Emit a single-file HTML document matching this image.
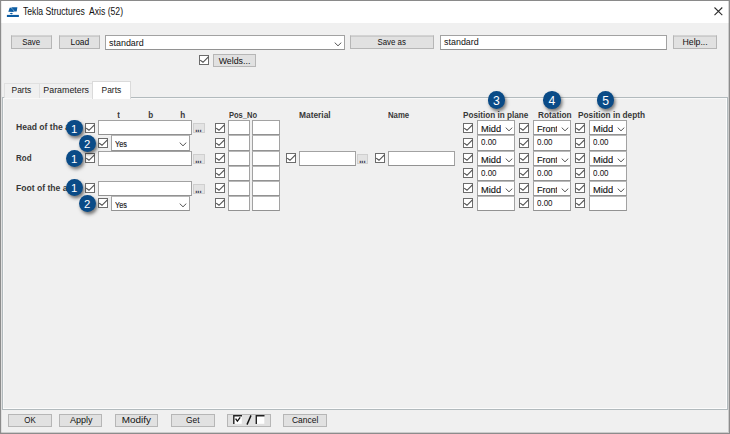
<!DOCTYPE html>
<html><head><meta charset="utf-8"><title>Tekla Structures Axis (52)</title>
<style>
*{box-sizing:border-box;margin:0;padding:0}
html,body{width:730px;height:434px;overflow:hidden;background:#f0f0f0}
body{font-family:"Liberation Sans",sans-serif;font-size:9.4px;color:#1a1a1a;position:relative}
#win{position:absolute;left:0;top:0;width:730px;height:434px;background:#f0f0f0;border:1px solid #8c8c8c;border-top-color:#8a8a8a;overflow:hidden}
#win>*{position:absolute}
#in{position:absolute;left:-1px;top:-1px;width:730px;height:434px}
#in:after{content:'';position:absolute;left:1px;top:1px;width:728px;height:432px;box-shadow:inset -1px -1px 0 rgba(110,110,110,.28),inset 1px 0 0 rgba(110,110,110,.12);pointer-events:none}
#in>*{position:absolute}
.title{left:1px;top:1px;width:728px;height:22px;background:#fff}
.tt{font-size:9.9px;color:#111;white-space:nowrap;line-height:13px}
.btn{background:#e1e1e1;border:1px solid #b6b6b6;text-align:center;white-space:nowrap;font-size:9.75px;color:#111}
.btn.hb{border-top-color:#d3d3d3;box-shadow:inset 0 1px 0 #cbcbcb}
.btn.sm{font-size:8px;font-weight:bold;line-height:11.4px!important;color:#3a3a55;border-color:#cfcfcf;background:#e3e3e3}
.tf{background:#fff;border:1px solid #a2a2a2;border-bottom-color:#929292;white-space:nowrap;overflow:hidden}
.tf>span{position:absolute;left:2.6px;top:-0.6px;line-height:13px;font-size:9.75px;color:#111}
.tf.st{border-top-color:#b8b8b8}
.tf.top>span{top:-0.9px;left:3.3px}
.tf.co.big>span{top:0.3px;left:3.1px}
.tf.co>span{top:1px;right:12.7px;overflow:hidden;-webkit-text-stroke:0.15px #222}
.tf.co.big>span{-webkit-text-stroke:0}
.tf i{position:absolute;top:0;height:100%;width:8px}
.tf i svg{position:absolute;left:0;top:5.8px}
.cb{width:10px;height:10px;background:#fff;border:1px solid #6c6c6c}
.cb svg{position:absolute;left:-1px;top:-1px}
.cb{overflow:visible}
.lb{white-space:nowrap;line-height:12px;font-size:9.75px}
.lb.b{font-weight:bold;color:#383838;font-size:9px}
.page{left:2px;top:97px;width:726px;height:313px;border:1px solid #b2babd;box-shadow:inset -1px -1px 0 #fcfcfc, inset 1px 1px 0 #f8f8f8}
.tab{border:1px solid #e0e0e0;border-bottom:none;background:#f0f0f0;text-align:center;line-height:12.5px;font-size:9.75px;white-space:nowrap}
.tab.act{background:#fff;line-height:15px;border-color:#dadada}
.ci{border-radius:50%;background:#0a4b87;color:#fff;text-align:center;font-size:12px;box-shadow:1.5px 2.5px 3.5px rgba(0,0,0,.5)}
.ico{overflow:visible}
.sx{display:inline-block;white-space:nowrap}
.sx.l{transform-origin:0 50%}
.sx.c{transform-origin:50% 50%}
</style></head>
<body><div id="win"><div id="in">
<div class="title"></div>
<svg class="ico" viewBox="0 0 30 18" width="30" height="18" style="left:0;top:0">
<path d="M9.7 7.8 L12 7.5 L12.1 7.25 L17.4 7.2 L16.7 11.5 L13.9 11.6 L13.8 11.9 L8.3 11.8 Z" fill="#0c5ca2"/>
<path d="M10.8 7.6 L13.7 10 L13.8 11.8" fill="none" stroke="#fff" stroke-width="0.45" opacity="0.85"/>
<ellipse cx="11.3" cy="13.5" rx="1.6" ry="0.5" fill="#0c5ca2"/>
<rect x="11.05" y="12.6" width="0.5" height="2.3" fill="#0c5ca2" opacity="0.55"/>
<rect x="6.9" y="14.9" width="12" height="2.1" fill="#0c5ca2"/>
</svg>
<div class="tt" style="left:23px;top:4.6px;"><span class="sx l" style="transform:scale(0.872,1.1)">Tekla Structures&nbsp; Axis (52)</span></div>
<svg class="ico" viewBox="0 0 9 9" width="9" height="9" style="left:713.6px;top:6.9px"><path d="M0.5 0.5 L8.3 8.1 M8.3 0.5 L0.5 8.1" stroke="#2b2b2b" stroke-width="1.05" fill="none"/></svg>
<div class="btn hb" style="left:11px;top:35px;width:41px;height:14px;line-height:12px"><span class="sx c" style="transform:scaleX(0.808)">Save</span></div>
<div class="btn hb" style="left:59px;top:35px;width:41px;height:14px;line-height:12px"><span class="sx c" style="transform:scaleX(0.867)">Load</span></div>
<div class="tf co big" style="left:105px;top:35px;width:239.5px;height:15px"><span><span class="sx l" style="transform:scaleX(0.916)">standard</span></span><i style="right:2px"><svg class="arr" viewBox="0 0 8 5" width="8" height="5"><path d="M0.7 0.6 L4 3.8 L7.3 0.6" fill="none" stroke="#555" stroke-width="1"/></svg></i></div>
<div class="btn hb" style="left:350px;top:35px;width:84px;height:14px;line-height:12px"><span class="sx c" style="transform:scaleX(0.808)">Save as</span></div>
<div class="tf top" style="left:439.5px;top:35px;width:227.5px;height:15px"><span><span class="sx l" style="transform:scaleX(0.916)">standard</span></span></div>
<div class="btn hb" style="left:673.4px;top:35px;width:43.3px;height:14px;line-height:12px"><span class="sx c" style="transform:scaleX(0.896)">Help...</span></div>
<div class="cb" style="left:198.7px;top:55.2px"><svg viewBox="0 0 10 10" width="10" height="10"><path d="M1.2 5.1 L4 7.3 L9.4 1.9" fill="none" stroke="#505050" stroke-width="1.15"/></svg></div>
<div class="btn" style="left:213px;top:54px;width:42.6px;height:13px;line-height:11px"><span class="sx c" style="transform:scaleX(0.906)">Welds...</span></div>
<div class="page"></div>
<div class="tab" style="left:4px;top:83px;width:35.5px;height:15px;"><span class="sx c" style="transform:scaleX(0.867)">Parts</span></div>
<div class="tab" style="left:39px;top:83px;width:53.5px;height:15px;padding-left:1.4px;"><span class="sx c" style="transform:scaleX(0.906)">Parameters</span></div>
<div class="tab act" style="left:92px;top:81px;width:38.5px;height:17.5px;"><span class="sx c" style="transform:scaleX(0.867)">Parts</span></div>
<div class="lb b" style="left:108.7px;top:108.8px;width:20px;text-align:center"><span class="sx c" style="transform:scaleX(0.9)">t</span></div>
<div class="lb b" style="left:141px;top:108.8px;width:20px;text-align:center"><span class="sx c" style="transform:scaleX(0.9)">b</span></div>
<div class="lb b" style="left:172.7px;top:108.8px;width:20px;text-align:center"><span class="sx c" style="transform:scaleX(0.9)">h</span></div>
<div class="lb b" style="left:228.5px;top:108.8px;"><span class="sx l" style="transform:scaleX(0.836)">Pos_No</span></div>
<div class="lb b" style="left:299.3px;top:108.8px;"><span class="sx l" style="transform:scaleX(0.93)">Material</span></div>
<div class="lb b" style="left:388.3px;top:108.8px;"><span class="sx l" style="transform:scaleX(0.865)">Name</span></div>
<div class="lb b" style="left:462.5px;top:108.8px;"><span class="sx l" style="transform:scaleX(0.908)">Position in plane</span></div>
<div class="lb b" style="left:538px;top:108.8px;"><span class="sx l" style="transform:scaleX(0.92)">Rotation</span></div>
<div class="lb b" style="left:577.5px;top:108.8px;"><span class="sx l" style="transform:scaleX(0.918)">Position in depth</span></div>
<div class="lb b" style="left:16px;top:121.3px;"><span class="sx l" style="transform:scaleX(0.953)">Head of the a</span></div>
<div class="lb b" style="left:16px;top:151.6px;"><span class="sx l" style="transform:scaleX(0.886)">Rod</span></div>
<div class="lb b" style="left:16px;top:181.6px;"><span class="sx l" style="transform:scaleX(0.953)">Foot of the a</span></div>
<div class="cb" style="left:85px;top:123px"><svg viewBox="0 0 10 10" width="10" height="10"><path d="M1.2 5.1 L4 7.3 L9.4 1.9" fill="none" stroke="#505050" stroke-width="1.15"/></svg></div>
<div class="tf" style="left:98px;top:120px;width:93.6px;height:15px"><span></span></div>
<div class="btn sm" style="left:193px;top:123px;width:11.6px;height:10px;line-height:8px"><span class="sx c" style="transform:translateY(1px) scale(0.95,1.9);transform-origin:50% 80%">...</span></div>
<div class="cb" style="left:85px;top:153px"><svg viewBox="0 0 10 10" width="10" height="10"><path d="M1.2 5.1 L4 7.3 L9.4 1.9" fill="none" stroke="#505050" stroke-width="1.15"/></svg></div>
<div class="tf" style="left:98px;top:151px;width:93.6px;height:15px"><span></span></div>
<div class="btn sm" style="left:193px;top:154px;width:11.6px;height:10px;line-height:8px"><span class="sx c" style="transform:translateY(1px) scale(0.95,1.9);transform-origin:50% 80%">...</span></div>
<div class="cb" style="left:85px;top:183px"><svg viewBox="0 0 10 10" width="10" height="10"><path d="M1.2 5.1 L4 7.3 L9.4 1.9" fill="none" stroke="#505050" stroke-width="1.15"/></svg></div>
<div class="tf" style="left:98px;top:181px;width:93.6px;height:15px"><span></span></div>
<div class="btn sm" style="left:193px;top:184px;width:11.6px;height:10px;line-height:8px"><span class="sx c" style="transform:translateY(1px) scale(0.95,1.9);transform-origin:50% 80%">...</span></div>
<div class="cb" style="left:98px;top:138px"><svg viewBox="0 0 10 10" width="10" height="10"><path d="M1.2 5.1 L4 7.3 L9.4 1.9" fill="none" stroke="#505050" stroke-width="1.15"/></svg></div>
<div class="tf co st" style="left:111px;top:135px;width:79px;height:16px"><span><span class="sx l" style="transform:scaleX(0.75)">Yes</span></span><i style="right:2px"><svg class="arr" viewBox="0 0 8 5" width="8" height="5"><path d="M0.7 0.6 L4 3.8 L7.3 0.6" fill="none" stroke="#555" stroke-width="1"/></svg></i></div>
<div class="cb" style="left:98px;top:198px"><svg viewBox="0 0 10 10" width="10" height="10"><path d="M1.2 5.1 L4 7.3 L9.4 1.9" fill="none" stroke="#505050" stroke-width="1.15"/></svg></div>
<div class="tf co st" style="left:111px;top:196px;width:79px;height:15px"><span><span class="sx l" style="transform:scaleX(0.75)">Yes</span></span><i style="right:2px"><svg class="arr" viewBox="0 0 8 5" width="8" height="5"><path d="M0.7 0.6 L4 3.8 L7.3 0.6" fill="none" stroke="#555" stroke-width="1"/></svg></i></div>
<div class="cb" style="left:215px;top:123px"><svg viewBox="0 0 10 10" width="10" height="10"><path d="M1.2 5.1 L4 7.3 L9.4 1.9" fill="none" stroke="#505050" stroke-width="1.15"/></svg></div>
<div class="tf" style="left:228px;top:120px;width:21.6px;height:15px"><span></span></div>
<div class="tf" style="left:252px;top:120px;width:28px;height:15px"><span></span></div>
<div class="cb" style="left:215px;top:138px"><svg viewBox="0 0 10 10" width="10" height="10"><path d="M1.2 5.1 L4 7.3 L9.4 1.9" fill="none" stroke="#505050" stroke-width="1.15"/></svg></div>
<div class="tf st" style="left:228px;top:135px;width:21.6px;height:16px"><span></span></div>
<div class="tf st" style="left:252px;top:135px;width:28px;height:16px"><span></span></div>
<div class="cb" style="left:215px;top:153px"><svg viewBox="0 0 10 10" width="10" height="10"><path d="M1.2 5.1 L4 7.3 L9.4 1.9" fill="none" stroke="#505050" stroke-width="1.15"/></svg></div>
<div class="tf st" style="left:228px;top:151px;width:21.6px;height:15px"><span></span></div>
<div class="tf st" style="left:252px;top:151px;width:28px;height:15px"><span></span></div>
<div class="cb" style="left:215px;top:168px"><svg viewBox="0 0 10 10" width="10" height="10"><path d="M1.2 5.1 L4 7.3 L9.4 1.9" fill="none" stroke="#505050" stroke-width="1.15"/></svg></div>
<div class="tf st" style="left:228px;top:166px;width:21.6px;height:15px"><span></span></div>
<div class="tf st" style="left:252px;top:166px;width:28px;height:15px"><span></span></div>
<div class="cb" style="left:215px;top:183px"><svg viewBox="0 0 10 10" width="10" height="10"><path d="M1.2 5.1 L4 7.3 L9.4 1.9" fill="none" stroke="#505050" stroke-width="1.15"/></svg></div>
<div class="tf st" style="left:228px;top:181px;width:21.6px;height:15px"><span></span></div>
<div class="tf st" style="left:252px;top:181px;width:28px;height:15px"><span></span></div>
<div class="cb" style="left:215px;top:198px"><svg viewBox="0 0 10 10" width="10" height="10"><path d="M1.2 5.1 L4 7.3 L9.4 1.9" fill="none" stroke="#505050" stroke-width="1.15"/></svg></div>
<div class="tf st" style="left:228px;top:196px;width:21.6px;height:15px"><span></span></div>
<div class="tf st" style="left:252px;top:196px;width:28px;height:15px"><span></span></div>
<div class="cb" style="left:286px;top:153px"><svg viewBox="0 0 10 10" width="10" height="10"><path d="M1.2 5.1 L4 7.3 L9.4 1.9" fill="none" stroke="#505050" stroke-width="1.15"/></svg></div>
<div class="tf" style="left:299px;top:151px;width:57px;height:15px"><span></span></div>
<div class="btn sm" style="left:356.6px;top:154px;width:11.2px;height:10px;line-height:8px"><span class="sx c" style="transform:translateY(1px) scale(0.95,1.9);transform-origin:50% 80%">...</span></div>
<div class="cb" style="left:375px;top:153px"><svg viewBox="0 0 10 10" width="10" height="10"><path d="M1.2 5.1 L4 7.3 L9.4 1.9" fill="none" stroke="#505050" stroke-width="1.15"/></svg></div>
<div class="tf" style="left:388px;top:151px;width:67px;height:15px"><span></span></div>
<div class="cb" style="left:463px;top:123px"><svg viewBox="0 0 10 10" width="10" height="10"><path d="M1.2 5.1 L4 7.3 L9.4 1.9" fill="none" stroke="#505050" stroke-width="1.15"/></svg></div>
<div class="tf co" style="left:477px;top:120px;width:38px;height:15px"><span><span class="sx l" style="transform:scaleX(0.955)">Midd</span></span><i style="right:0.9px"><svg class="arr" viewBox="0 0 8 5" width="8" height="5"><path d="M0.7 0.6 L4 3.8 L7.3 0.6" fill="none" stroke="#555" stroke-width="1"/></svg></i></div>
<div class="cb" style="left:463px;top:138px"><svg viewBox="0 0 10 10" width="10" height="10"><path d="M1.2 5.1 L4 7.3 L9.4 1.9" fill="none" stroke="#505050" stroke-width="1.15"/></svg></div>
<div class="tf st" style="left:477px;top:135px;width:38px;height:16px"><span><span class="sx l" style="transform:scaleX(0.818)">0.00</span></span></div>
<div class="cb" style="left:463px;top:153px"><svg viewBox="0 0 10 10" width="10" height="10"><path d="M1.2 5.1 L4 7.3 L9.4 1.9" fill="none" stroke="#505050" stroke-width="1.15"/></svg></div>
<div class="tf co st" style="left:477px;top:151px;width:38px;height:15px"><span><span class="sx l" style="transform:scaleX(0.955)">Midd</span></span><i style="right:0.9px"><svg class="arr" viewBox="0 0 8 5" width="8" height="5"><path d="M0.7 0.6 L4 3.8 L7.3 0.6" fill="none" stroke="#555" stroke-width="1"/></svg></i></div>
<div class="cb" style="left:463px;top:168px"><svg viewBox="0 0 10 10" width="10" height="10"><path d="M1.2 5.1 L4 7.3 L9.4 1.9" fill="none" stroke="#505050" stroke-width="1.15"/></svg></div>
<div class="tf st" style="left:477px;top:166px;width:38px;height:15px"><span><span class="sx l" style="transform:scaleX(0.818)">0.00</span></span></div>
<div class="cb" style="left:463px;top:183px"><svg viewBox="0 0 10 10" width="10" height="10"><path d="M1.2 5.1 L4 7.3 L9.4 1.9" fill="none" stroke="#505050" stroke-width="1.15"/></svg></div>
<div class="tf co st" style="left:477px;top:181px;width:38px;height:15px"><span><span class="sx l" style="transform:scaleX(0.955)">Midd</span></span><i style="right:0.9px"><svg class="arr" viewBox="0 0 8 5" width="8" height="5"><path d="M0.7 0.6 L4 3.8 L7.3 0.6" fill="none" stroke="#555" stroke-width="1"/></svg></i></div>
<div class="cb" style="left:463px;top:198px"><svg viewBox="0 0 10 10" width="10" height="10"><path d="M1.2 5.1 L4 7.3 L9.4 1.9" fill="none" stroke="#505050" stroke-width="1.15"/></svg></div>
<div class="tf st" style="left:477px;top:196px;width:38px;height:15px"><span></span></div>
<div class="cb" style="left:519px;top:123px"><svg viewBox="0 0 10 10" width="10" height="10"><path d="M1.2 5.1 L4 7.3 L9.4 1.9" fill="none" stroke="#505050" stroke-width="1.15"/></svg></div>
<div class="tf co" style="left:533px;top:120px;width:38px;height:15px"><span><span class="sx l" style="transform:scaleX(0.925)">Front</span></span><i style="right:0.9px"><svg class="arr" viewBox="0 0 8 5" width="8" height="5"><path d="M0.7 0.6 L4 3.8 L7.3 0.6" fill="none" stroke="#555" stroke-width="1"/></svg></i></div>
<div class="cb" style="left:519px;top:138px"><svg viewBox="0 0 10 10" width="10" height="10"><path d="M1.2 5.1 L4 7.3 L9.4 1.9" fill="none" stroke="#505050" stroke-width="1.15"/></svg></div>
<div class="tf st" style="left:533px;top:135px;width:38px;height:16px"><span><span class="sx l" style="transform:scaleX(0.818)">0.00</span></span></div>
<div class="cb" style="left:519px;top:153px"><svg viewBox="0 0 10 10" width="10" height="10"><path d="M1.2 5.1 L4 7.3 L9.4 1.9" fill="none" stroke="#505050" stroke-width="1.15"/></svg></div>
<div class="tf co st" style="left:533px;top:151px;width:38px;height:15px"><span><span class="sx l" style="transform:scaleX(0.925)">Front</span></span><i style="right:0.9px"><svg class="arr" viewBox="0 0 8 5" width="8" height="5"><path d="M0.7 0.6 L4 3.8 L7.3 0.6" fill="none" stroke="#555" stroke-width="1"/></svg></i></div>
<div class="cb" style="left:519px;top:168px"><svg viewBox="0 0 10 10" width="10" height="10"><path d="M1.2 5.1 L4 7.3 L9.4 1.9" fill="none" stroke="#505050" stroke-width="1.15"/></svg></div>
<div class="tf st" style="left:533px;top:166px;width:38px;height:15px"><span><span class="sx l" style="transform:scaleX(0.818)">0.00</span></span></div>
<div class="cb" style="left:519px;top:183px"><svg viewBox="0 0 10 10" width="10" height="10"><path d="M1.2 5.1 L4 7.3 L9.4 1.9" fill="none" stroke="#505050" stroke-width="1.15"/></svg></div>
<div class="tf co st" style="left:533px;top:181px;width:38px;height:15px"><span><span class="sx l" style="transform:scaleX(0.925)">Front</span></span><i style="right:0.9px"><svg class="arr" viewBox="0 0 8 5" width="8" height="5"><path d="M0.7 0.6 L4 3.8 L7.3 0.6" fill="none" stroke="#555" stroke-width="1"/></svg></i></div>
<div class="cb" style="left:519px;top:198px"><svg viewBox="0 0 10 10" width="10" height="10"><path d="M1.2 5.1 L4 7.3 L9.4 1.9" fill="none" stroke="#505050" stroke-width="1.15"/></svg></div>
<div class="tf st" style="left:533px;top:196px;width:38px;height:15px"><span><span class="sx l" style="transform:scaleX(0.818)">0.00</span></span></div>
<div class="cb" style="left:575px;top:123px"><svg viewBox="0 0 10 10" width="10" height="10"><path d="M1.2 5.1 L4 7.3 L9.4 1.9" fill="none" stroke="#505050" stroke-width="1.15"/></svg></div>
<div class="tf co" style="left:589px;top:120px;width:38px;height:15px"><span><span class="sx l" style="transform:scaleX(0.955)">Midd</span></span><i style="right:0.9px"><svg class="arr" viewBox="0 0 8 5" width="8" height="5"><path d="M0.7 0.6 L4 3.8 L7.3 0.6" fill="none" stroke="#555" stroke-width="1"/></svg></i></div>
<div class="cb" style="left:575px;top:138px"><svg viewBox="0 0 10 10" width="10" height="10"><path d="M1.2 5.1 L4 7.3 L9.4 1.9" fill="none" stroke="#505050" stroke-width="1.15"/></svg></div>
<div class="tf st" style="left:589px;top:135px;width:38px;height:16px"><span><span class="sx l" style="transform:scaleX(0.818)">0.00</span></span></div>
<div class="cb" style="left:575px;top:153px"><svg viewBox="0 0 10 10" width="10" height="10"><path d="M1.2 5.1 L4 7.3 L9.4 1.9" fill="none" stroke="#505050" stroke-width="1.15"/></svg></div>
<div class="tf co st" style="left:589px;top:151px;width:38px;height:15px"><span><span class="sx l" style="transform:scaleX(0.955)">Midd</span></span><i style="right:0.9px"><svg class="arr" viewBox="0 0 8 5" width="8" height="5"><path d="M0.7 0.6 L4 3.8 L7.3 0.6" fill="none" stroke="#555" stroke-width="1"/></svg></i></div>
<div class="cb" style="left:575px;top:168px"><svg viewBox="0 0 10 10" width="10" height="10"><path d="M1.2 5.1 L4 7.3 L9.4 1.9" fill="none" stroke="#505050" stroke-width="1.15"/></svg></div>
<div class="tf st" style="left:589px;top:166px;width:38px;height:15px"><span><span class="sx l" style="transform:scaleX(0.818)">0.00</span></span></div>
<div class="cb" style="left:575px;top:183px"><svg viewBox="0 0 10 10" width="10" height="10"><path d="M1.2 5.1 L4 7.3 L9.4 1.9" fill="none" stroke="#505050" stroke-width="1.15"/></svg></div>
<div class="tf co st" style="left:589px;top:181px;width:38px;height:15px"><span><span class="sx l" style="transform:scaleX(0.955)">Midd</span></span><i style="right:0.9px"><svg class="arr" viewBox="0 0 8 5" width="8" height="5"><path d="M0.7 0.6 L4 3.8 L7.3 0.6" fill="none" stroke="#555" stroke-width="1"/></svg></i></div>
<div class="cb" style="left:575px;top:198px"><svg viewBox="0 0 10 10" width="10" height="10"><path d="M1.2 5.1 L4 7.3 L9.4 1.9" fill="none" stroke="#505050" stroke-width="1.15"/></svg></div>
<div class="tf st" style="left:589px;top:196px;width:38px;height:15px"><span></span></div>
<div class="ci" style="left:65.90px;top:119.60px;width:16.8px;height:16.8px;line-height:19.0px;font-size:11.4px">1</div>
<div class="ci" style="left:78.90px;top:134.90px;width:16.8px;height:16.8px;line-height:19.0px;font-size:11.4px">2</div>
<div class="ci" style="left:65.90px;top:149.80px;width:16.8px;height:16.8px;line-height:19.0px;font-size:11.4px">1</div>
<div class="ci" style="left:65.90px;top:179.20px;width:16.8px;height:16.8px;line-height:19.0px;font-size:11.4px">1</div>
<div class="ci" style="left:78.90px;top:194.80px;width:16.8px;height:16.8px;line-height:19.0px;font-size:11.4px">2</div>
<div class="ci" style="left:487.80px;top:91.20px;width:17.4px;height:17.4px;line-height:20.2px;font-size:12.2px">3</div>
<div class="ci" style="left:543.20px;top:91.20px;width:17.4px;height:17.4px;line-height:20.2px;font-size:12.2px">4</div>
<div class="ci" style="left:597.00px;top:91.20px;width:17.4px;height:17.4px;line-height:20.2px;font-size:12.2px">5</div>
<div class="btn" style="left:8.2px;top:414px;width:43.6px;height:13px;line-height:10px"><span class="sx c" style="transform:scaleX(0.808)">OK</span></div>
<div class="btn" style="left:59.2px;top:414px;width:43.2px;height:13px;line-height:10px"><span class="sx c" style="transform:scaleX(0.925)">Apply</span></div>
<div class="btn" style="left:114.8px;top:414px;width:43.7px;height:13px;line-height:10px"><span class="sx c" style="transform:scaleX(1.013)">Modify</span></div>
<div class="btn" style="left:171.4px;top:414px;width:43.2px;height:13px;line-height:10px"><span class="sx c" style="transform:scaleX(0.857)">Get</span></div>
<div class="btn" style="left:227px;top:414px;width:43.5px;height:13px;line-height:11px"></div>
<div class="btn" style="left:283.3px;top:414px;width:43.7px;height:13px;line-height:10px"><span class="sx c" style="transform:scaleX(0.867)">Cancel</span></div>
<svg class="ico" viewBox="0 0 34 10" width="34" height="10" style="left:232.5px;top:415px">
<rect x="0.8" y="0.8" width="8" height="8" fill="#fff"/><path d="M0.8 9 V0.8 H9" fill="none" stroke="#222" stroke-width="1.4"/>
<path d="M2.6 3.6 L4.4 6.2 L7.2 2.4" fill="none" stroke="#111" stroke-width="1.3"/>
<path d="M14 9.6 L18 0.4" stroke="#111" stroke-width="1.4"/>
<rect x="23.3" y="0.8" width="8" height="8" fill="#fff"/><path d="M23.3 9 V0.8 H31.5" fill="none" stroke="#222" stroke-width="1.4"/>
</svg>
</div></div></body></html>
